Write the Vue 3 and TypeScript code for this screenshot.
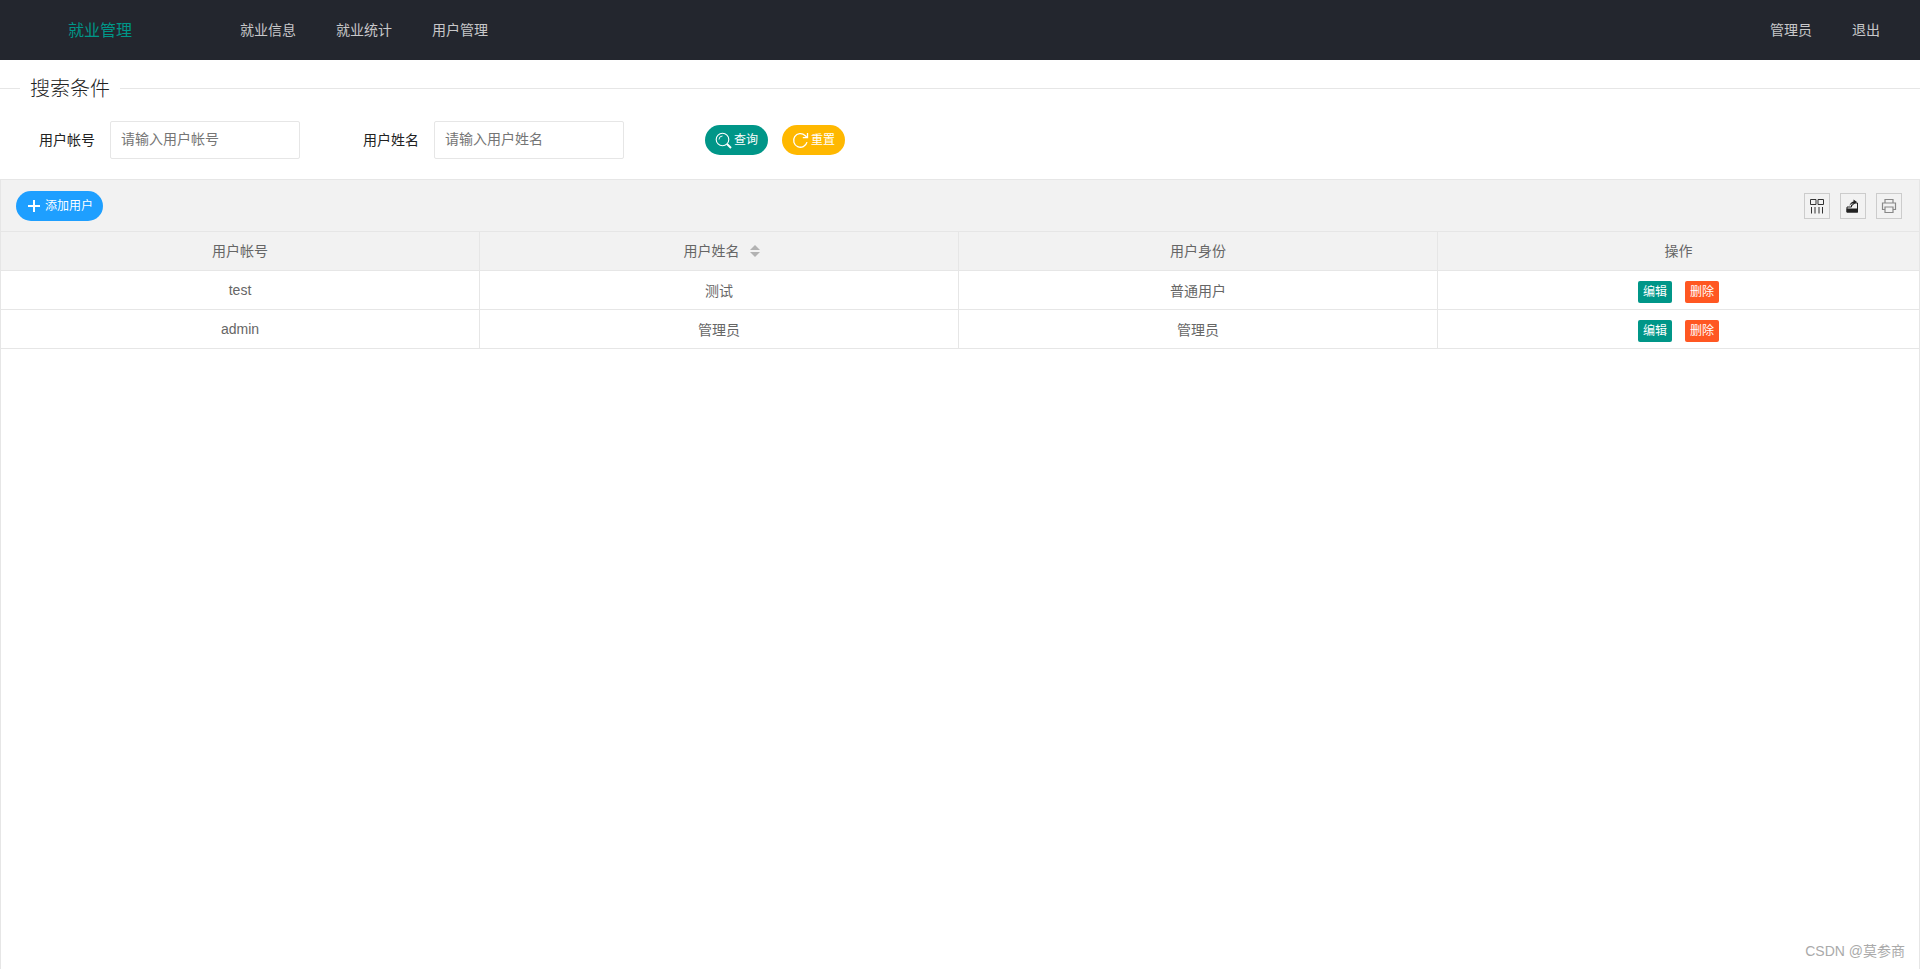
<template>
  <div class="page">
    <header class="top-bar">
      <div class="logo">就业管理</div>
      <nav class="main-nav">
        <a v-for="item in navItems" :key="item" class="nav-item">{{ item }}</a>
      </nav>
      <nav class="user-nav">
        <a class="nav-item">管理员</a>
        <a class="nav-item">退出</a>
      </nav>
    </header>

    <fieldset class="search-title">
      <legend>搜索条件</legend>
    </fieldset>

    <form class="search-form" @submit.prevent>
      <div v-for="field in searchFields" :key="field.label" class="form-field">
        <label>{{ field.label }}</label>
        <input type="text" :placeholder="field.placeholder" />
      </div>
      <div class="form-actions">
        <button class="pill teal" type="button">
          <svg class="btn-icon" viewBox="0 0 17 17" fill="none" stroke="#fff" stroke-width="1.1">
            <circle cx="7.500" cy="7.500" r="6.300" />
            <path d="M4 7.500a3.500 3.500 0 0 1 3.500-3.500" stroke-width="0.9" />
            <path d="M12 12l4 4" stroke-width="2" />
          </svg>
          <span>查询</span>
        </button>
        <button class="pill amber" type="button">
          <svg class="btn-icon" viewBox="0 0 17 17" fill="none" stroke="#fff" stroke-width="1.300">
            <path d="M15 10.200A6.800 6.800 0 1 1 13 3.400L15.200 5.400" />
            <path d="M15.500 1V5.700H10.800" />
          </svg>
          <span>重置</span>
        </button>
      </div>
    </form>

    <section class="data-table">
      <div class="toolbar">
        <button class="pill blue" type="button">
          <svg class="plus-icon" viewBox="0 0 12 12" fill="none" stroke="#fff" stroke-width="2">
            <path d="M6 0v12M0 6h12" />
          </svg>
          <span>添加用户</span>
        </button>
        <div class="tools">
          <span class="tool">
            <svg viewBox="0 0 16 16" fill="none" stroke="#333" stroke-width="1">
              <path d="M1.500 1.500h5.500v5h-5.500zM9 1.500h5.500v5H9zM2.500 9v6.500M6 9v6.500M10 9v6.500M13.500 9v6.500" />
            </svg>
          </span>
          <span class="tool">
            <svg viewBox="0 0 16 16">
              <path d="M2 9h4.500v-2h1.500v-2h4.500v9H2z" fill="none" stroke="#222" stroke-width="1" />
              <path d="M1.500 10.500h11.500v4H1.500z" fill="#222" />
              <path d="M4.500 8c.3-2.500 2-4.200 4-4.500V1.500L12 4 8.500 6.500V5C7 5.200 5.500 6.200 4.500 8z" fill="#222" />
            </svg>
          </span>
          <span class="tool">
            <svg viewBox="0 0 16 16" fill="none" stroke="#888" stroke-width="1.200">
              <path d="M4 5V1.500h8V5" />
              <path d="M4 11.500H1.500V5h13v6.500H12" />
              <path d="M4 9h8v5.500H4z" />
            </svg>
          </span>
        </div>
      </div>

      <div class="row head">
        <div class="cell">用户帐号</div>
        <div class="cell sortable">
          用户姓名
          <span class="sort"><i class="up"></i><i class="down"></i></span>
        </div>
        <div class="cell">用户身份</div>
        <div class="cell">操作</div>
      </div>
      <div v-for="user in users" :key="user.account" class="row">
        <div class="cell">{{ user.account }}</div>
        <div class="cell">{{ user.name }}</div>
        <div class="cell">{{ user.role }}</div>
        <div class="cell actions">
          <a class="mini teal">编辑</a>
          <a class="mini red">删除</a>
        </div>
      </div>
    </section>

    <div class="watermark">CSDN @莫参商</div>
  </div>
</template>

<script setup lang="ts">
const navItems: string[] = ['就业信息', '就业统计', '用户管理'];

const searchFields = [
  { label: '用户帐号', placeholder: '请输入用户帐号' },
  { label: '用户姓名', placeholder: '请输入用户姓名' },
];

const users = [
  { account: 'test', name: '测试', role: '普通用户' },
  { account: 'admin', name: '管理员', role: '管理员' },
];
</script>

<style>
html,
body {
  margin: 0;
  background: #fff;
}
</style>

<style scoped>
.page {
  position: relative;
  display: flex;
  flex-direction: column;
  height: 969px;
  overflow: hidden;
  font-family: "Liberation Sans", "Noto Sans CJK SC", sans-serif;
  font-size: 14px;
  color: #666;
}

.top-bar {
  display: flex;
  align-items: center;
  flex: none;
  height: 60px;
  padding-bottom: 2px;
  box-sizing: border-box;
  background: #23262e;
}

.logo {
  width: 220px;
  padding-left: 68px;
  box-sizing: border-box;
  font-size: 16px;
  color: #009688;
}

.main-nav {
  display: flex;
  flex: 1;
}

.user-nav {
  display: flex;
  padding-right: 20px;
}

.nav-item {
  padding: 0 20px;
  color: rgba(255, 255, 255, 0.75);
}

.search-title {
  flex: none;
  margin: 13px 0 0;
  padding: 0;
  border: 0;
  border-top: 1px solid #e6e6e6;
}

.search-title legend {
  margin-left: 20px;
  padding: 2px 10px 0;
  font-size: 20px;
  font-weight: 300;
  line-height: 28px;
  color: #222;
}

.search-form {
  display: flex;
  align-items: center;
  flex: none;
  height: 38px;
  margin: 18px 0 20px;
  padding-left: 39px;
}

.form-field {
  display: flex;
  align-items: center;
  margin-right: 63px;
}

.form-field label {
  width: 71px;
  padding-bottom: 2px;
  color: #222;
}

.form-field input {
  width: 190px;
  height: 38px;
  padding: 0 10px 2px;
  box-sizing: border-box;
  border: 1px solid #e6e6e6;
  border-radius: 2px;
  outline: none;
  font: inherit;
  color: #333;
}

.form-field input::placeholder {
  color: #757575;
}

.form-actions {
  display: flex;
  gap: 14px;
  margin-left: 18px;
}

.pill {
  display: inline-flex;
  align-items: center;
  justify-content: center;
  height: 30px;
  padding: 0;
  border: 0;
  border-radius: 100px;
  font: inherit;
  font-size: 12px;
  color: #fff;
}

.pill span {
  margin-top: -3px;
}

.form-actions .pill {
  width: 63px;
  gap: 2px;
}

.btn-icon {
  width: 17px;
  height: 17px;
}

.plus-icon {
  width: 12px;
  height: 12px;
}

.teal {
  background: #009688;
}

.amber {
  background: #ffb800;
}

.blue {
  background: #1e9fff;
}

.red {
  background: #ff5722;
}

.data-table {
  display: flex;
  flex-direction: column;
  flex: 1;
  border: 1px solid #e6e6e6;
  border-bottom: 0;
}

.toolbar {
  display: flex;
  align-items: center;
  justify-content: space-between;
  flex: none;
  height: 52px;
  padding: 0 17px 0 15px;
  box-sizing: border-box;
  background: #f2f2f2;
  border-bottom: 1px solid #e6e6e6;
}

.toolbar .pill {
  justify-content: flex-start;
  width: 87px;
  gap: 5px;
  padding-left: 12px;
  box-sizing: border-box;
}

.tools {
  display: flex;
  gap: 10px;
}

.tool {
  display: flex;
  align-items: center;
  justify-content: center;
  width: 26px;
  height: 26px;
  box-sizing: border-box;
  border: 1px solid #ccc;
}

.tool svg {
  width: 16px;
  height: 16px;
}

.row {
  display: grid;
  grid-template-columns: repeat(3, 479px) 1fr;
  flex: none;
  height: 39px;
  box-sizing: border-box;
  border-bottom: 1px solid #e6e6e6;
}

.row.head {
  background: #f2f2f2;
}

.row.head .cell {
  padding-bottom: 2px;
}

.row.head .cell.sortable {
  padding-left: 5px;
}

.cell {
  display: flex;
  align-items: center;
  justify-content: center;
  border-right: 1px solid #e6e6e6;
}

.cell:last-child {
  border-right: 0;
}

.sort {
  display: inline-flex;
  flex-direction: column;
  gap: 2px;
  margin-top: 2px;
  margin-left: 10px;
}

.sort i {
  width: 0;
  height: 0;
  border-left: 5px solid transparent;
  border-right: 5px solid transparent;
}

.sort .up {
  border-bottom: 5px solid #b2b2b2;
}

.sort .down {
  border-top: 5px solid #b2b2b2;
}

.actions {
  gap: 13px;
  padding-top: 4px;
}

.mini {
  width: 34px;
  height: 22px;
  border-radius: 2px;
  font-size: 12px;
  line-height: 22px;
  text-align: center;
  color: #fff;
}

.watermark {
  position: absolute;
  right: 15px;
  bottom: 9px;
  font-size: 14px;
  color: #aaa;
}
</style>
